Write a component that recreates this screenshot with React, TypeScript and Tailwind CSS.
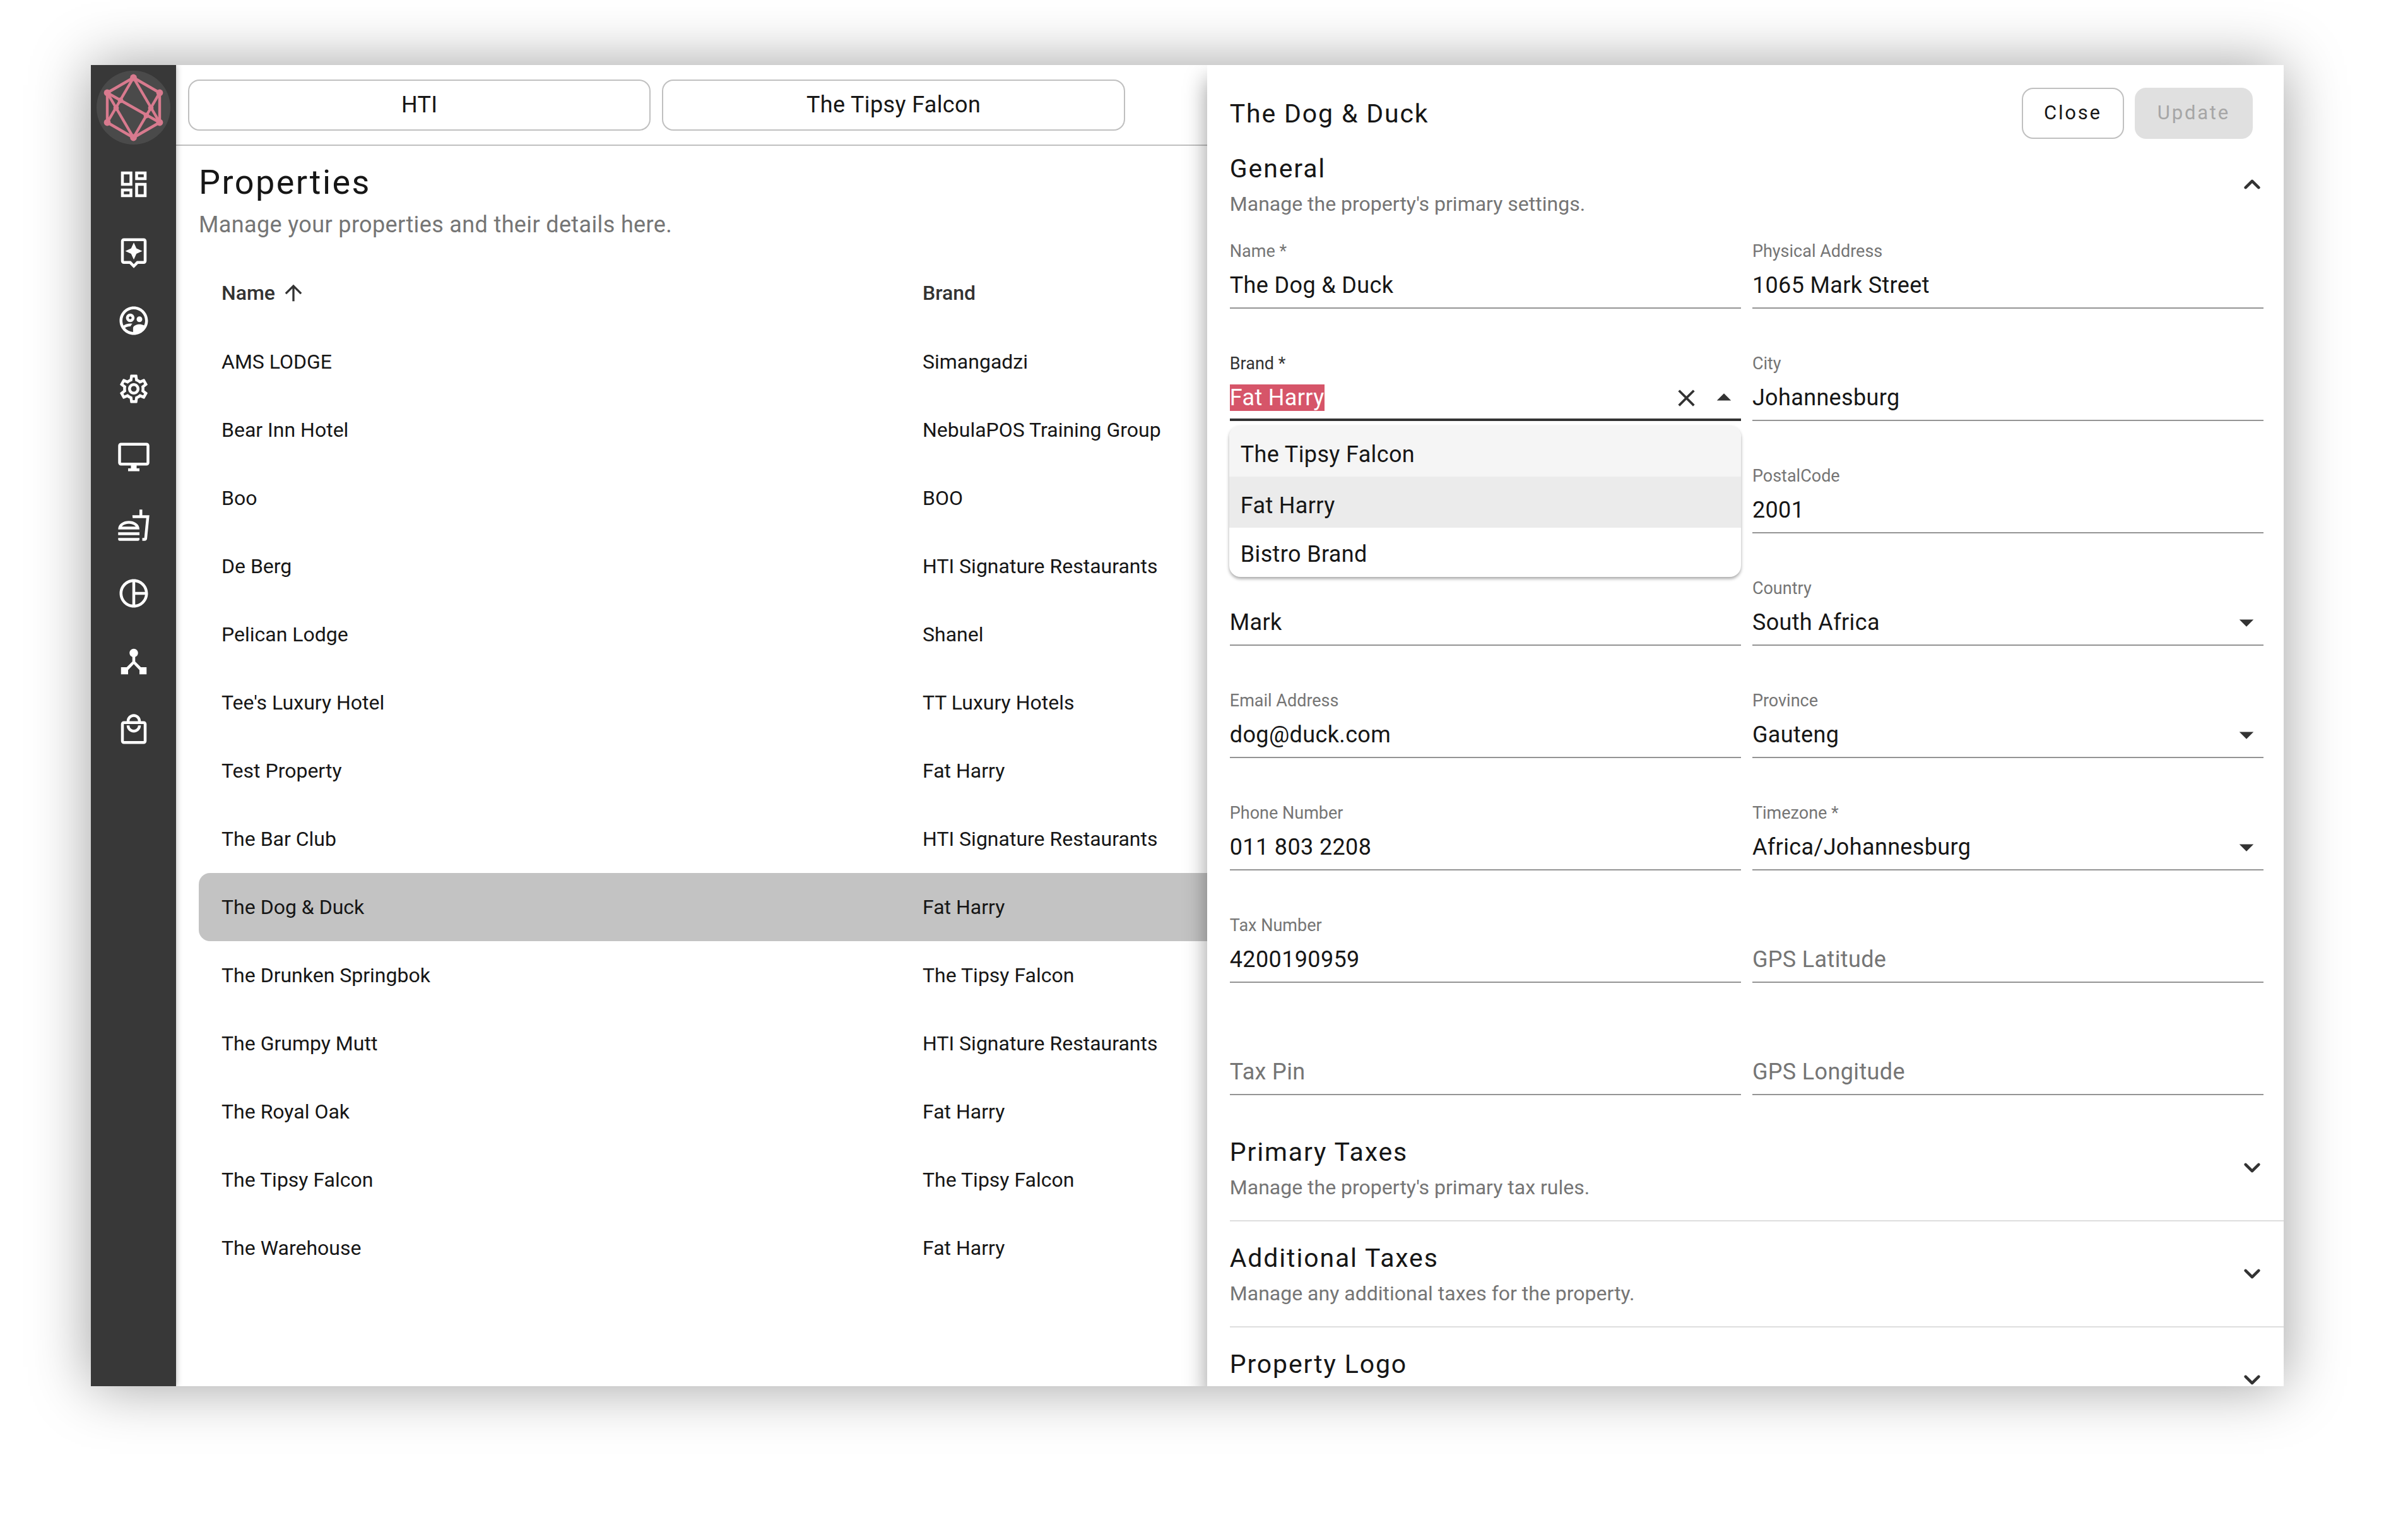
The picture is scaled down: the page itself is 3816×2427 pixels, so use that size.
import { useEffect, useRef, useState } from "react";
import type { ReactNode } from "react";
import {
  MdArrowDropDown,
  MdArrowDropUp,
  MdArrowUpward,
  MdClose,
  MdOutlineAssistant,
  MdOutlineDashboard,
  MdOutlineDesktopWindows,
  MdOutlineDeviceHub,
  MdOutlineFastfood,
  MdOutlineLocalMall,
  MdOutlinePieChart,
  MdOutlineSettings,
  MdOutlineSupervisedUserCircle,
} from "react-icons/md";

const navItems = [
  { label: "Dashboard", Icon: MdOutlineDashboard },
  { label: "Assistant", Icon: MdOutlineAssistant },
  { label: "Users", Icon: MdOutlineSupervisedUserCircle },
  { label: "Settings", Icon: MdOutlineSettings },
  { label: "Terminals", Icon: MdOutlineDesktopWindows },
  { label: "Menu", Icon: MdOutlineFastfood },
  { label: "Reports", Icon: MdOutlinePieChart },
  { label: "Integrations", Icon: MdOutlineDeviceHub },
  { label: "Store", Icon: MdOutlineLocalMall },
];

const properties = [
  { name: "AMS LODGE", brand: "Simangadzi" },
  { name: "Bear Inn Hotel", brand: "NebulaPOS Training Group" },
  { name: "Boo", brand: "BOO" },
  { name: "De Berg", brand: "HTI Signature Restaurants" },
  { name: "Pelican Lodge", brand: "Shanel" },
  { name: "Tee's Luxury Hotel", brand: "TT Luxury Hotels" },
  { name: "Test Property", brand: "Fat Harry" },
  { name: "The Bar Club", brand: "HTI Signature Restaurants" },
  { name: "The Dog & Duck", brand: "Fat Harry" },
  { name: "The Drunken Springbok", brand: "The Tipsy Falcon" },
  { name: "The Grumpy Mutt", brand: "HTI Signature Restaurants" },
  { name: "The Royal Oak", brand: "Fat Harry" },
  { name: "The Tipsy Falcon", brand: "The Tipsy Falcon" },
  { name: "The Warehouse", brand: "Fat Harry" },
];

const brands = ["The Tipsy Falcon", "Fat Harry", "Bistro Brand"];

function Logo() {
  return (
    <svg viewBox="0 0 117 117" className="w-[117px] h-[117px]" aria-hidden="true">
      <circle cx="58.5" cy="58.5" r="58.5" fill="#4a4a4a" />
      <g stroke="#d87a8e" strokeWidth="4.4" fill="none" strokeLinejoin="round">
        <path d="M58.5 11 L100 35 L100 82 L58.5 106 L17 82 L17 35 Z" />
        <path d="M58.5 11 L17 82" />
        <path d="M58.5 11 L100 82" />
        <path d="M17 35 L58.5 106" />
        <path d="M100 35 L58.5 106" />
        <path d="M17 35 L100 82" />
      </g>
      <g fill="#d87a8e">
        <circle cx="58.5" cy="11" r="5.4" />
        <circle cx="100" cy="35" r="5.4" />
        <circle cx="100" cy="82" r="5.4" />
        <circle cx="58.5" cy="106" r="5.4" />
        <circle cx="17" cy="82" r="5.4" />
        <circle cx="17" cy="35" r="5.4" />
        <circle cx="38" cy="47" r="4.4" />
        <circle cx="31" cy="59" r="4.4" />
        <circle cx="86" cy="59" r="4.4" />
        <circle cx="79" cy="71" r="4.4" />
      </g>
    </svg>
  );
}

function Chevron({ up }: { up?: boolean }) {
  return (
    <svg viewBox="0 0 24 24" className="w-[54px] h-[54px]" fill="none" stroke="#333333" strokeWidth="2" strokeLinecap="round" strokeLinejoin="round" aria-hidden="true">
      <path d={up ? "M7.4 14.3 L12 9.7 L16.6 14.3" : "M7.4 9.7 L12 14.3 L16.6 9.7"} />
    </svg>
  );
}

function SectionHeader({ title, text, open }: { title: string; text?: string; open?: boolean }) {
  return (
    <button
      type="button"
      aria-expanded={!!open}
      className={`w-full shrink-0 flex items-center justify-between pr-[23px] text-left ${
        open ? "h-[144px]" : "h-[168px] border-b-2 border-[#dedede]"
      }`}
    >
      <span className="pt-[6px]">
        <span className="block text-[41px] leading-[54px] tracking-[0.045em]">{title}</span>
        <span className="block h-[54px] mt-[2px] text-[32px] leading-[54px] text-[#757575]">{text}</span>
      </span>
      <Chevron up={open} />
    </button>
  );
}

type FieldProps = { id: string; label?: string; value?: string; placeholder?: string; children?: ReactNode };

function Field({ id, label, value, placeholder, children }: FieldProps) {
  return (
    <div className="relative">
      <label htmlFor={id} className="block h-[36px] text-[27px] leading-[36px] text-[#757575]">
        {label}
      </label>
      {children ?? (
        <input
          id={id}
          defaultValue={value}
          placeholder={placeholder}
          aria-label={label ? undefined : placeholder ?? "Contact"}
          className="block w-full h-[73px] pt-[1px] border-b-2 border-[#949494] bg-transparent text-[36px] tracking-[0.01em] outline-none placeholder:text-[#757575] placeholder:opacity-100"
        />
      )}
    </div>
  );
}

function SelectField({ id, label, value }: { id: string; label: string; value: string }) {
  return (
    <Field id={id} label={label}>
      <div className="relative">
        <select
          id={id}
          defaultValue={value}
          className="block w-full h-[73px] appearance-none border-b-2 border-[#949494] bg-transparent text-[36px] tracking-[0.01em] outline-none"
        >
          <option value={value}>{value}</option>
        </select>
        <MdArrowDropDown className="absolute right-0 top-[9px] w-[54px] h-[54px] text-[#333333] pointer-events-none" />
      </div>
    </Field>
  );
}

function BrandField() {
  const ref = useRef<HTMLInputElement>(null);
  const [value, setValue] = useState("Fat Harry");

  useEffect(() => {
    ref.current?.focus();
    ref.current?.select();
  }, []);

  return (
    <div className="relative">
      <label htmlFor="brand" className="block h-[36px] text-[27px] leading-[36px] text-[#333333]">
        Brand *
      </label>
      <div className="flex items-center h-[73px] pt-[3px] border-b-4 border-[#333333]">
        <input
          id="brand"
          ref={ref}
          role="combobox"
          aria-expanded="true"
          aria-controls="brand-options"
          value={value}
          onChange={(e) => setValue(e.target.value)}
          className="flex-1 min-w-0 h-full bg-transparent text-[36px] tracking-[0.01em] outline-none selection:bg-[#d65569] selection:text-white"
        />
        <button type="button" aria-label="Clear" onClick={() => setValue("")} className="mr-[10px] text-[#333333]">
          <MdClose className="w-[45px] h-[45px]" />
        </button>
        <button type="button" aria-label="Toggle brands" className="text-[#333333]">
          <MdArrowDropUp className="w-[54px] h-[54px]" />
        </button>
      </div>
      <ul
        id="brand-options"
        role="listbox"
        className="absolute -left-px right-0 top-full mt-[7px] z-10 overflow-hidden rounded-[18px] bg-white shadow-[0_3px_5px_rgba(0,0,0,0.35)]"
      >
        {brands.map((brand, i) => (
          <li
            key={brand}
            role="option"
            aria-selected={brand === "Fat Harry"}
            className={`flex items-center px-[18px] text-[36px] tracking-[0.01em] ${
              i === 0 ? "h-[81px] pt-[10px] bg-[#f5f5f5]" : i === 1 ? "h-[81px] pt-[10px] bg-[#ebebeb]" : "h-[78px] pt-[5px]"
            }`}
          >
            {brand}
          </li>
        ))}
      </ul>
    </div>
  );
}

export default function App() {
  return (
    <div className="h-screen pt-[103px] pb-[231px] pl-[144px] pr-[197px] bg-white text-[#161616] font-[Roboto,sans-serif]">
      <div className="flex h-full overflow-hidden bg-white shadow-[0_0_88px_rgba(0,0,0,0.38)]">
        <nav className="relative z-10 w-[135px] shrink-0 bg-[#383838] text-white shadow-[1px_0_9px_rgba(0,0,0,0.25)]">
          <a href="#" aria-label="Home" className="flex justify-center h-[135px] pt-[9px]">
            <Logo />
          </a>
          {navItems.map(({ label, Icon }) => (
            <a key={label} href="#" aria-label={label} className="flex items-center justify-center h-[108px]">
              <Icon className="w-[54px] h-[54px]" />
            </a>
          ))}
        </nav>

        <main className="flex-1 min-w-0 overflow-hidden">
          <header className="flex items-center gap-[18px] h-[128px] pl-[19px] pr-[130px] border-b-2 border-[#c0c0c0] text-[36px] tracking-[0.01em]">
            <button type="button" className="flex-1 h-[81px] rounded-[18px] border-2 border-[#c0c0c0]">
              HTI
            </button>
            <button type="button" className="flex-1 h-[81px] rounded-[18px] border-2 border-[#c0c0c0]">
              The Tipsy Falcon
            </button>
          </header>

          <div className="pl-[36px] pt-[18px]">
            <h1 className="text-[54px] leading-[80px] tracking-[0.045em]">Properties</h1>
            <p className="text-[36px] leading-[54px] text-[#757575] tracking-[0.01em]">
              Manage your properties and their details here.
            </p>

            <table className="mt-[28px] w-full table-fixed border-separate border-spacing-0 text-left text-[32px]">
              <thead>
                <tr className="h-[108px] text-[#333333]">
                  <th className="w-[1111px] pl-[36px] pt-0 pb-[2px] font-medium">
                    <span className="flex items-center gap-[9px]">
                      Name
                      <MdArrowUpward className="w-[40px] h-[40px]" />
                    </span>
                  </th>
                  <th className="pl-[36px] pt-0 pb-[2px] font-medium">Brand</th>
                </tr>
              </thead>
              <tbody>
                {properties.map((p) => (
                  <tr key={p.name} className="h-[108px]">
                    <td className={`pl-[36px] py-0 ${p.name === "The Dog & Duck" ? "bg-[#c3c3c3] rounded-l-[18px]" : ""}`}>
                      {p.name}
                    </td>
                    <td className={`pl-[36px] py-0 whitespace-nowrap ${p.name === "The Dog & Duck" ? "bg-[#c3c3c3]" : ""}`}>
                      {p.brand}
                    </td>
                  </tr>
                ))}
              </tbody>
            </table>
          </div>
        </main>

        <aside className="relative z-10 w-[49.1%] shrink-0 flex flex-col pl-[36px] bg-white shadow-[0_22px_34px_rgba(0,0,0,0.4)]">
          <div className="flex items-center shrink-0 gap-[17px] h-[117px] pt-[36px] pr-[49px]">
            <h2 className="flex-1 text-[41px] leading-[54px] tracking-[0.045em]">The Dog &amp; Duck</h2>
            <button
              type="button"
              className="h-[81px] px-[33px] rounded-[18px] border-2 border-[#c0c0c0] text-[31px] tracking-[0.09em]"
            >
              Close
            </button>
            <button
              type="button"
              disabled
              className="h-[81px] px-[36px] rounded-[18px] bg-[#e0e0e0] text-[#a6a6a6] text-[31px] tracking-[0.09em]"
            >
              Update
            </button>
          </div>

          <SectionHeader open title="General" text="Manage the property's primary settings." />

          <div className="grid grid-cols-2 gap-x-[18px] gap-y-[69px] shrink-0 pt-[16px] pr-[32px] mb-[32px]">
            <Field id="name" label="Name *" value="The Dog & Duck" />
            <Field id="address" label="Physical Address" value="1065 Mark Street" />
            <BrandField />
            <Field id="city" label="City" value="Johannesburg" />
            <Field id="group" />
            <Field id="postal" label="PostalCode" value="2001" />
            <Field id="contact" value="Mark" />
            <SelectField id="country" label="Country" value="South Africa" />
            <Field id="email" label="Email Address" value="dog@duck.com" />
            <SelectField id="province" label="Province" value="Gauteng" />
            <Field id="phone" label="Phone Number" value="011 803 2208" />
            <SelectField id="timezone" label="Timezone *" value="Africa/Johannesburg" />
            <Field id="taxNumber" label="Tax Number" value="4200190959" />
            <Field id="latitude" placeholder="GPS Latitude" />
            <Field id="taxPin" placeholder="Tax Pin" />
            <Field id="longitude" placeholder="GPS Longitude" />
          </div>

          <SectionHeader title="Primary Taxes" text="Manage the property's primary tax rules." />
          <SectionHeader title="Additional Taxes" text="Manage any additional taxes for the property." />
          <SectionHeader title="Property Logo" />
        </aside>
      </div>
    </div>
  );
}
